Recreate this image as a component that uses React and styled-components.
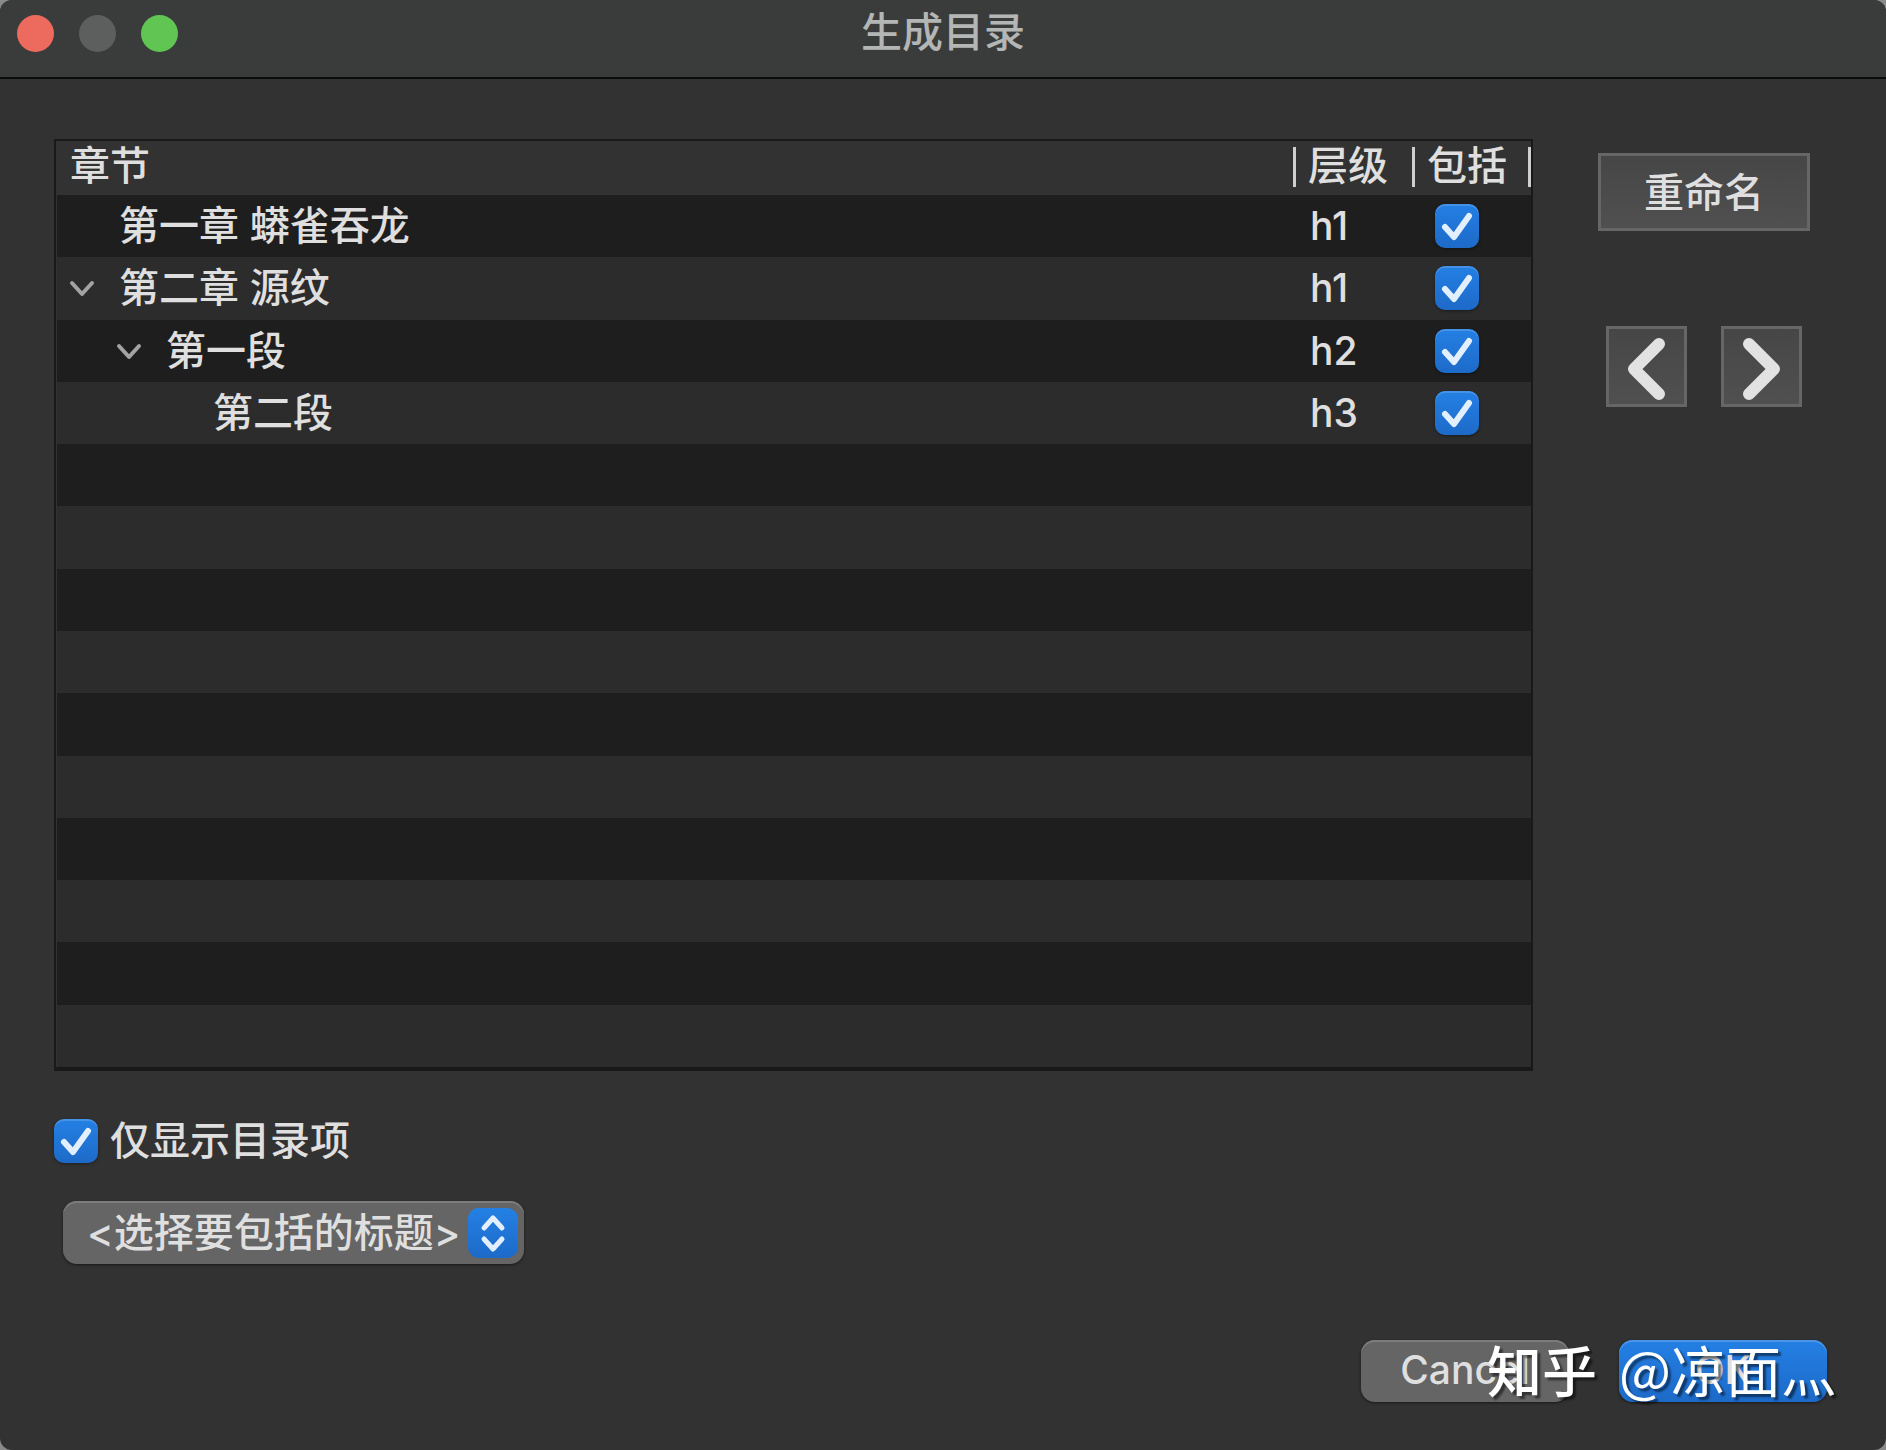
import { useState } from "react";
import styled, { createGlobalStyle } from "styled-components";

const CHAPTERS = [
	{ id: 1, title: "第一章 蟒雀吞龙", level: "h1", depth: 0 },
	{ id: 2, title: "第二章 源纹", level: "h1", depth: 0, expandable: true },
	{ id: 3, title: "第一段", level: "h2", depth: 1, expandable: true },
	{ id: 4, title: "第二段", level: "h3", depth: 2 },
];
const ROW_COUNT = 14;

function CheckBox({ id, label, checked, onChange }) {
	return (
		<CheckWrapper>
			<CheckInput
				id={id}
				type="checkbox"
				aria-label={label}
				checked={checked}
				onChange={onChange}
			/>
			<CheckMark viewBox="0 0 44 44" aria-hidden="true">
				{checked && <path d="M10 23 L19 33 L34 12" />}
			</CheckMark>
		</CheckWrapper>
	);
}

function App() {
	const [included, setIncluded] = useState([1, 2, 3, 4]);
	const [onlyToc, setOnlyToc] = useState(true);

	const toggle = (id) =>
		setIncluded((prev) =>
			prev.includes(id) ? prev.filter((v) => v !== id) : [...prev, id]
		);

	return (
		<>
			<GlobalStyle />
			<Window>
				<TitleBar>
					<Lights>
						<Light type="button" aria-label="关闭" $color="#ed6a5e" />
						<Light type="button" aria-label="最小化" $color="#5d5f5e" />
						<Light type="button" aria-label="缩放" $color="#61c554" />
					</Lights>
					<Title>生成目录</Title>
				</TitleBar>
				<Content>
					<Main>
						<TreeFrame>
							<Tree>
								<thead>
									<tr>
										<HeadCell>章节</HeadCell>
										<HeadCell $narrow>层级</HeadCell>
										<HeadCell $narrow $last>
											包括
										</HeadCell>
									</tr>
								</thead>
								<tbody>
									{CHAPTERS.map((chapter) => (
										<Row key={chapter.id}>
											<td>
												<Chapter $depth={chapter.depth}>
													{chapter.expandable ? (
														<Expander type="button" aria-label="折叠">
															<svg viewBox="0 0 26 18" aria-hidden="true">
																<path d="M3 4 L13 15 L23 4" />
															</svg>
														</Expander>
													) : (
														<ExpanderSpace />
													)}
													{chapter.title}
												</Chapter>
											</td>
											<LevelCell>{chapter.level}</LevelCell>
											<IncludeCell>
												<CheckBox
													id={`include-${chapter.id}`}
													label={chapter.title}
													checked={included.includes(chapter.id)}
													onChange={() => toggle(chapter.id)}
												/>
											</IncludeCell>
										</Row>
									))}
									{Array.from({ length: ROW_COUNT - CHAPTERS.length }, (_, i) => (
										<Row key={`empty-${i}`}>
											<td colSpan={3} />
										</Row>
									))}
								</tbody>
							</Tree>
						</TreeFrame>
						<Side>
							<RenameButton type="button">重命名</RenameButton>
							<Arrows>
								<ArrowButton type="button" aria-label="提升层级">
									<svg viewBox="0 0 75 75" aria-hidden="true">
										<path d="M50 15 L25 40 L50 65" />
									</svg>
								</ArrowButton>
								<ArrowButton type="button" aria-label="降低层级">
									<svg viewBox="0 0 75 75" aria-hidden="true">
										<path d="M25 15 L50 40 L25 65" />
									</svg>
								</ArrowButton>
							</Arrows>
						</Side>
					</Main>
					<OnlyToc>
						<CheckBox
							id="only-toc"
							checked={onlyToc}
							onChange={() => setOnlyToc(!onlyToc)}
						/>
						<label htmlFor="only-toc">仅显示目录项</label>
					</OnlyToc>
					<SelectWrapper>
						<Select aria-label="选择要包括的标题" defaultValue="none">
							<option value="none">&lt;选择要包括的标题&gt;</option>
						</Select>
						<SelectKnob viewBox="0 0 50 50" aria-hidden="true">
							<path d="M16 20 L25 10 L34 20 M16 31 L25 41 L34 31" />
						</SelectKnob>
					</SelectWrapper>
				</Content>
				<Footer>
					<DialogButton type="button">Cancel</DialogButton>
					<DialogButton type="button" $primary>
						OK
					</DialogButton>
					<Watermark>
						<b>知乎</b>
						<span>@凉面灬</span>
					</Watermark>
				</Footer>
			</Window>
		</>
	);
}

const GlobalStyle = createGlobalStyle`
	* {
		box-sizing: border-box;
	}
	body {
		margin: 0;
		background: #8a8a8a;
	}
	body,
	button,
	select {
		font-family: Inter, "Noto Sans CJK SC", sans-serif;
		font-size: 40px;
		font-weight: 500;
		color: #dfdfdf;
	}
`;

const Window = styled.div`
	display: flex;
	flex-direction: column;
	min-height: 100vh;
	border-radius: 12px;
	background: #323232;
	overflow: hidden;
`;

const TitleBar = styled.header`
	display: grid;
	grid-template-columns: 1fr auto 1fr;
	height: 79px;
	padding: 0 17px 10px;
	align-items: center;
	background: #3a3c3b;
	border-bottom: 2px solid #0c0c0c;
`;
const Lights = styled.div`
	display: flex;
	gap: 25px;
`;
const Light = styled.button`
	width: 37px;
	height: 37px;
	padding: 0;
	border: 0;
	border-radius: 50%;
	background: ${({ $color }) => $color};
`;
const Title = styled.h1`
	margin: 0;
	padding-bottom: 4px;
	font-size: 41px;
	line-height: 60px;
	font-weight: 500;
	color: #b4b5b5;
`;

const Content = styled.main`
	flex: 1;
	display: flex;
	flex-direction: column;
	padding: 60px 76px 0 54px;
`;
const Main = styled.div`
	flex: 1;
	display: flex;
	gap: 65px;
`;

const TreeFrame = styled.div`
	flex: 1;
	display: flex;
	padding-left: 1px;
	border: 2px solid #191919;
	border-bottom-width: 4px;
`;
const Tree = styled.table`
	width: 100%;
	table-layout: fixed;
	border-collapse: collapse;
	th,
	td {
		padding: 0;
	}
`;
const HeadCell = styled.th`
	position: relative;
	width: ${({ $narrow }) => ($narrow ? "119px" : "auto")};
	height: 54px;
	font-weight: 500;
	line-height: 40px;
	text-align: left;
	&& {
		padding: 0 0 4px ${({ $narrow }) => ($narrow ? "15px" : "13px")};
	}
	/* column dividers */
	&::before,
	&::after {
		content: "";
		position: absolute;
		top: 6px;
		width: 3px;
		height: 40px;
		background: #cfcfcf;
	}
	&::before {
		left: 0;
		display: ${({ $narrow }) => ($narrow ? "block" : "none")};
	}
	&::after {
		right: 0;
		display: ${({ $last }) => ($last ? "block" : "none")};
	}
`;
const Row = styled.tr`
	height: 62px;
	background: #2c2c2c;
	&:nth-child(odd) {
		background: #1e1e1e;
	}
`;
const Chapter = styled.div`
	display: flex;
	align-items: center;
	gap: 24px;
	padding-left: ${({ $depth }) => 12 + $depth * 47}px;
	line-height: 62px;
	white-space: pre;
`;
const ExpanderSpace = styled.span`
	width: 26px;
`;
const Expander = styled.button`
	display: flex;
	width: 26px;
	padding: 0;
	border: 0;
	background: none;
	svg {
		width: 26px;
		height: 18px;
		fill: none;
		stroke: #a3a3a3;
		stroke-width: 4;
		stroke-linecap: round;
		stroke-linejoin: round;
	}
`;
const LevelCell = styled.td`
	font-size: 39px;
	line-height: 60px;
	&& {
		padding-left: 17px;
	}
`;
const IncludeCell = styled.td`
	&& {
		padding-left: 23px;
	}
`;

const CheckWrapper = styled.span`
	display: grid;
	width: 44px;
	height: 44px;
	> * {
		grid-area: 1 / 1;
	}
`;
const CheckInput = styled.input`
	appearance: none;
	width: 44px;
	height: 44px;
	margin: 0;
	border-radius: 10px;
	background: #656565;
	box-shadow: inset 0 2px 0 rgba(255, 255, 255, 0.15),
		0 1px 3px rgba(0, 0, 0, 0.4);
	&:checked {
		background: linear-gradient(#2480e4, #1d6ac8);
	}
`;
const CheckMark = styled.svg`
	width: 44px;
	height: 44px;
	fill: none;
	stroke: #e1efff;
	stroke-width: 6;
	stroke-linecap: round;
	stroke-linejoin: round;
	pointer-events: none;
`;

const Side = styled.aside`
	display: flex;
	flex-direction: column;
	align-items: center;
	gap: 95px;
	width: 212px;
	padding-top: 14px;
`;
const SquareButton = styled.button`
	padding: 0;
	border: 3px solid #666;
	background: linear-gradient(#464646, #505050);
`;
const RenameButton = styled(SquareButton)`
	width: 100%;
	height: 78px;
	padding-bottom: 4px;
`;
const Arrows = styled.div`
	display: flex;
	gap: 34px;
`;
const ArrowButton = styled(SquareButton)`
	display: flex;
	width: 81px;
	height: 81px;
	svg {
		width: 75px;
		height: 75px;
		fill: none;
		stroke: #e2e2e2;
		stroke-width: 12;
		stroke-linecap: round;
		stroke-linejoin: round;
	}
`;

const OnlyToc = styled.div`
	display: flex;
	align-items: center;
	gap: 12px;
	height: 44px;
	margin-top: 48px;
	line-height: 40px;
`;

const SelectWrapper = styled.div`
	display: grid;
	align-self: flex-start;
	align-items: center;
	margin: 38px 0 0 9px;
	> * {
		grid-area: 1 / 1;
	}
`;
const Select = styled.select`
	appearance: none;
	width: 461px;
	height: 63px;
	padding: 0 60px 0 24px;
	border: 0;
	border-radius: 14px;
	background: #656565;
	box-shadow: inset 0 2px 0 #7c7c7c, 0 1px 3px rgba(0, 0, 0, 0.5);
`;
const SelectKnob = styled.svg`
	justify-self: end;
	width: 50px;
	height: 50px;
	margin-right: 6px;
	border-radius: 11px;
	background: linear-gradient(#2480e4, #1d6ac8);
	fill: none;
	stroke: #e1efff;
	stroke-width: 5;
	stroke-linecap: round;
	stroke-linejoin: round;
	pointer-events: none;
`;

const Footer = styled.footer`
	position: relative;
	display: flex;
	justify-content: flex-end;
	gap: 50px;
	padding: 76px 59px 48px;
`;
const DialogButton = styled.button`
	width: 208px;
	height: 62px;
	padding: 0 0 4px;
	border: 0;
	border-radius: 14px;
	font-size: 39px;
	background: ${({ $primary }) =>
		$primary ? "linear-gradient(#2480e4, #1d6ac8)" : "#656565"};
	box-shadow: inset 0 2px 0 ${({ $primary }) => ($primary ? "#4a95e8" : "#7c7c7c")},
		0 1px 3px rgba(0, 0, 0, 0.5);
`;
const Watermark = styled.div`
	position: absolute;
	right: 50px;
	bottom: 50px;
	display: flex;
	gap: 22px;
	font-family: "Noto Sans CJK SC", sans-serif;
	font-size: 55px;
	font-weight: 400;
	line-height: 64px;
	color: #fff;
	text-shadow: 3px 3px 2px rgba(0, 0, 0, 0.5);
	pointer-events: none;
	b {
		font-weight: 500;
	}
`;

export default App;
